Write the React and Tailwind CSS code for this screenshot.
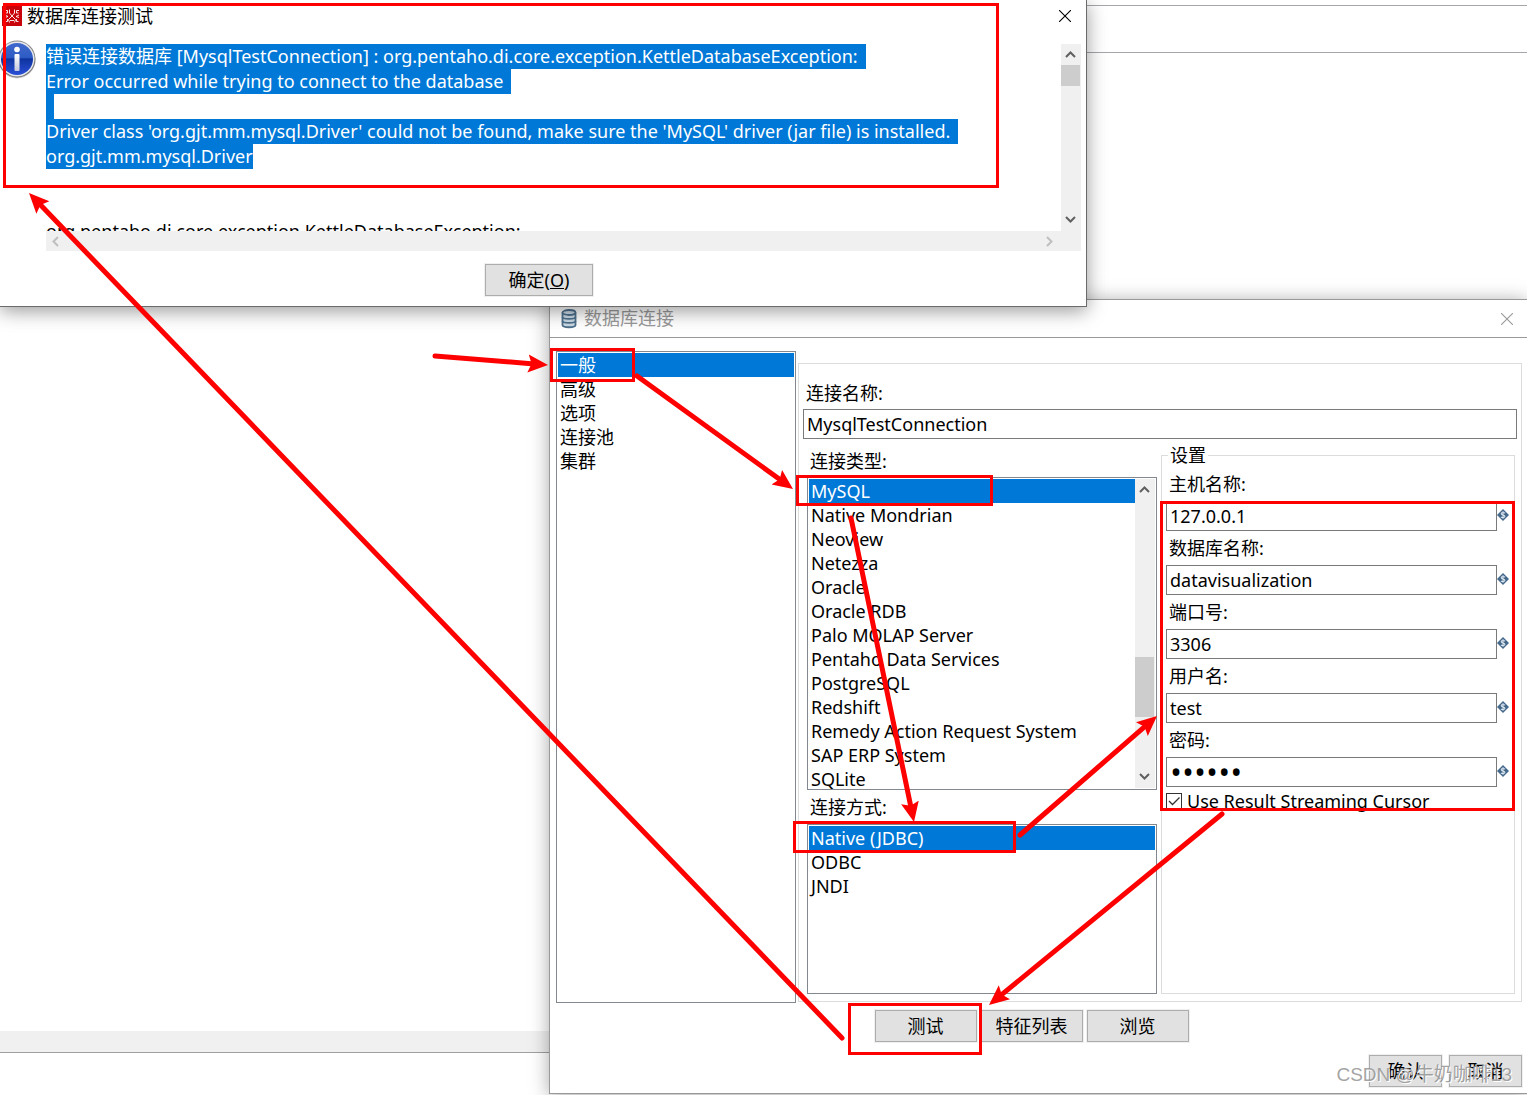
import { useState } from "react";

const SECTIONS = ["一般", "高级", "选项", "连接池", "集群"];

const CONNECTION_TYPES = [
  "MySQL",
  "Native Mondrian",
  "Neoview",
  "Netezza",
  "Oracle",
  "Oracle RDB",
  "Palo MOLAP Server",
  "Pentaho Data Services",
  "PostgreSQL",
  "Redshift",
  "Remedy Action Request System",
  "SAP ERP System",
  "SQLite",
];

const ACCESS_METHODS = ["Native (JDBC)", "ODBC", "JNDI"];

const SETTINGS = [
  { id: "host", label: "主机名称:", value: "127.0.0.1" },
  { id: "database", label: "数据库名称:", value: "datavisualization" },
  { id: "port", label: "端口号:", value: "3306" },
  { id: "user", label: "用户名:", value: "test" },
  { id: "password", label: "密码:", value: "secret", type: "password" },
];

const ERROR_LINES = [
  "错误连接数据库 [MysqlTestConnection] : org.pentaho.di.core.exception.KettleDatabaseException:",
  "Error occurred while trying to connect to the database",
  "",
  "Driver class 'org.gjt.mm.mysql.Driver' could not be found, make sure the 'MySQL' driver (jar file) is installed.",
  "org.gjt.mm.mysql.Driver",
];

const BOXES = [
  [3, 3, 996, 185],
  [550, 348, 85, 34],
  [796, 475, 197, 31],
  [793, 821, 223, 32],
  [1160, 501, 355, 310],
  [848, 1003, 134, 52],
];

const ARROWS = [
  [435, 356, 548, 365],
  [637, 376, 793, 489],
  [851, 518, 914, 822],
  [1020, 835, 1157, 716],
  [1222, 814, 989, 1005],
  [842, 1038, 29, 193],
];

function CloseIcon() {
  return (
    <svg width="12" height="12" viewBox="0 0 12 12" fill="none" stroke="currentColor" strokeWidth="1.1">
      <path d="M0 0L12 12M12 0L0 12" />
    </svg>
  );
}

function Chevron({ dir }) {
  const paths = {
    up: "M1 8L5.5 3.5L10 8",
    down: "M1 3L5.5 7.5L10 3",
    left: "M8 1L3.5 5.5L8 10",
    right: "M3 1L7.5 5.5L3 10",
  };
  return (
    <svg width="11" height="11" viewBox="0 0 11 11" fill="none" stroke="currentColor" strokeWidth="2">
      <path d={paths[dir]} />
    </svg>
  );
}

function KettleIcon() {
  return (
    <svg width="20" height="20" viewBox="0 0 20 20" fill="none">
      <rect width="20" height="20" fill="#c8040a" />
      <g stroke="#fff" strokeWidth="0.9">
        <path d="M3 4.500h2.500v2.500h-2M7.500 3.500v3.500l2.500 3" />
        <path d="M17 4.500h-2.500v2.500h2M12.500 3.500v3.500l-2.500 3" />
        <path d="M3.500 15.500h2v-2.500M7.500 16.500l-1-3l3.500-3.500" />
        <path d="M16.500 15.500h-2v-2.500M12.500 16.500l1-3l-3.500-3.500" />
        <path d="M3 9l3 1.500l-3 1M17 9l-3 1.500l3 1M8 14.500h4" />
      </g>
    </svg>
  );
}

function InfoIcon() {
  return (
    <svg width="37" height="40" viewBox="2 0 37 40">
      <defs>
        <linearGradient id="infoBlue" x1="0" y1="0" x2="0" y2="1">
          <stop offset="0" stopColor="#3f68cc" />
          <stop offset="0.45" stopColor="#2e5cc4" />
          <stop offset="0.5" stopColor="#0f34a0" />
          <stop offset="1" stopColor="#2a4fd6" />
        </linearGradient>
        <linearGradient id="infoRim" x1="0" y1="0" x2="0" y2="1">
          <stop offset="0" stopColor="#8d8d8d" />
          <stop offset="1" stopColor="#6b6b6b" />
        </linearGradient>
        <linearGradient id="infoStem" x1="0" y1="0" x2="0" y2="1">
          <stop offset="0" stopColor="#fff" />
          <stop offset="1" stopColor="#c4c8dc" />
        </linearGradient>
      </defs>
      <circle cx="19" cy="20" r="18.5" fill="#000" opacity="0.2" />
      <circle cx="19" cy="19" r="18.5" fill="url(#infoRim)" />
      <circle cx="19" cy="19" r="17.5" fill="#e6e8ec" />
      <circle cx="19" cy="19" r="16" fill="url(#infoBlue)" />
      <circle cx="19" cy="9.500" r="2.800" fill="#fff" />
      <rect x="16.500" y="14" width="5" height="17" rx="1" fill="url(#infoStem)" />
    </svg>
  );
}

function DatabaseIcon() {
  return (
    <svg width="16" height="20" viewBox="0 0 16 20" fill="#c9d8e4" stroke="#4d6f8b" strokeWidth="1.8">
      <path d="M1.500 3.500v12.500c0 3 13 3 13 0V3.500" />
      <ellipse cx="8" cy="3.500" rx="6.500" ry="2.500" />
      <path d="M1.500 8c0 2.500 13 2.500 13 0M1.500 12c0 2.500 13 2.500 13 0" fill="none" />
    </svg>
  );
}

function VariableIcon() {
  return (
    <svg className="shrink-0" width="12" height="14" viewBox="0 0 12 14" fill="none">
      <path d="M6 0L12 6L6 12L0 6Z" fill="#43688a" />
      <path d="M8 4.200C7 3.200 4.200 3.200 4.200 4.700C4.200 6.200 7.900 5.700 7.900 7.300C7.900 8.800 5 8.800 4 7.800M6 2.300V9.700" stroke="#dce6ee" strokeWidth="1.100" />
    </svg>
  );
}

function ScrollBar({ thumb }) {
  return (
    <div className="flex w-5 shrink-0 flex-col bg-[#f0f0f0] text-[#606060]">
      <button type="button" aria-label="Scroll up" className="flex h-[21px] w-[19px] shrink-0 items-center justify-center">
        <Chevron dir="up" />
      </button>
      <div className="flex-1">{thumb}</div>
      <button type="button" aria-label="Scroll down" className="flex h-[23px] w-[19px] shrink-0 items-center justify-center">
        <Chevron dir="down" />
      </button>
    </div>
  );
}

function ListBox({ label, items, className, children }) {
  const [selected, setSelected] = useState(items[0]);

  return (
    <div className={`flex overflow-hidden border border-[#828790] bg-white p-px ${className}`}>
      <ul role="listbox" aria-label={label} className="min-w-0 flex-1">
        {items.map((item) => (
          <li
            key={item}
            role="option"
            aria-selected={item === selected}
            onClick={() => setSelected(item)}
            className={`h-6 cursor-default truncate px-[2px] leading-6 ${item === selected ? "bg-[#0078d7] text-white" : ""}`}
          >
            {item}
          </li>
        ))}
      </ul>
      {children}
    </div>
  );
}

function PushButton({ className, children }) {
  return (
    <button type="button" className={`h-8 border border-[#adadad] bg-[#e1e1e1] outline outline-1 outline-[#f0f0f0] ${className}`}>
      {children}
    </button>
  );
}

function TestResultDialog() {
  return (
    <section
      aria-label="数据库连接测试"
      className="absolute left-0 top-0 z-20 w-[1087px] border-b border-r border-[#6b6b6b] bg-white shadow-[0_4px_18px_rgba(0,0,0,0.4)]"
    >
      <header className="flex h-8 items-center gap-[5px] pl-[2px] pr-[15px]">
        <KettleIcon />
        <h2 className="flex-1">数据库连接测试</h2>
        <button type="button" aria-label="Close">
          <CloseIcon />
        </button>
      </header>
      <div className="flex pr-[5px] pt-2">
        <div className="w-[46px] shrink-0">
          <InfoIcon />
        </div>
        <div className="min-w-0 flex-1 pt-1">
          <div className="flex h-[187px]">
            <div className="flex-1 overflow-hidden whitespace-pre leading-[25px]">
              {ERROR_LINES.map((line, i) => (
                <div key={i} className="h-[25px]">
                  <span className={`inline-block h-[25px] bg-[#0078d7] text-white ${i < 4 ? "pr-2" : ""}`}>{line}</span>
                </div>
              ))}
              <div className="h-[50px]" />
              <div className="h-[25px]">org.pentaho.di.core.exception.KettleDatabaseException:</div>
            </div>
            <ScrollBar thumb={<div className="h-[21px] w-[19px] bg-[#cdcdcd]" />} />
          </div>
          <div className="flex h-5 items-center justify-between bg-[#f0f0f0] pl-1 pr-[26px] text-[#bfbfbf]">
            <button type="button" aria-label="Scroll left">
              <Chevron dir="left" />
            </button>
            <button type="button" aria-label="Scroll right">
              <Chevron dir="right" />
            </button>
          </div>
        </div>
      </div>
      <div className="flex justify-center pb-[10px] pr-2 pt-[13px]">
        <PushButton className="w-[108px]">
          确定(<u>O</u>)
        </PushButton>
      </div>
    </section>
  );
}

function ConnectionDialog() {
  return (
    <section
      aria-label="数据库连接"
      className="absolute bottom-px left-[549px] right-0 top-[299px] z-10 flex flex-col border-b border-l border-t border-[#999] bg-white shadow-[0_2px_18px_rgba(0,0,0,0.35)]"
    >
      <header className="flex h-[38px] shrink-0 items-center gap-[7px] border-b border-[#999] pl-[11px] pr-[14px] text-[#999]">
        <DatabaseIcon />
        <h2 className="flex-1">数据库连接</h2>
        <button type="button" aria-label="Close">
          <CloseIcon />
        </button>
      </header>

      <div className="flex min-h-0 flex-1 gap-[2px] pl-[6px] pr-[5px] pt-[13px]">
        <ListBox label="分类" items={SECTIONS} className="w-60 shrink-0" />

        <div className="mb-px mt-3 flex min-w-0 flex-1 flex-col border border-[#dcdcdc] px-1 pb-[7px] pt-[13px]">
          <label htmlFor="connection-name" className="h-8 shrink-0 pl-[3px] leading-8">
            连接名称:
          </label>
          <input
            id="connection-name"
            defaultValue="MysqlTestConnection"
            className="h-[30px] w-full shrink-0 border border-[#7a7a7a] px-[3px] outline-none"
          />

          <div className="flex min-h-0 flex-1 gap-1 pl-1 pr-[2px]">
            <div className="flex min-w-0 flex-1 flex-col pt-[6px]">
              <div className="h-8 shrink-0 pl-[3px] leading-8">连接类型:</div>
              <ListBox label="连接类型" items={CONNECTION_TYPES} className="h-[313px] shrink-0">
                <ScrollBar thumb={<div className="mt-[157px] h-[60px] w-[19px] bg-[#cdcdcd]" />} />
              </ListBox>
              <div className="h-[34px] shrink-0 pl-[3px] leading-[34px]">连接方式:</div>
              <ListBox label="连接方式" items={ACCESS_METHODS} className="flex-1" />
            </div>

            <fieldset className="mt-[5px] w-[354px] min-w-0 shrink-0 border border-[#dcdcdc] pl-1 pr-[5px]">
              <legend className="ml-[2px] px-[2px] leading-[23px]">设置</legend>
              {SETTINGS.map(({ id, label, value, type }) => (
                <div key={id}>
                  <label htmlFor={id} className="block h-[34px] pl-[3px] leading-[34px]">
                    {label}
                  </label>
                  <div className="flex items-center">
                    <input
                      id={id}
                      type={type || "text"}
                      defaultValue={value}
                      className={`h-[30px] w-0 min-w-0 flex-1 border border-[#7a7a7a] px-[3px] outline-none ${
                        type === "password" ? "font-['Open_Sans',sans-serif] text-[32px]" : ""
                      }`}
                    />
                    <VariableIcon />
                  </div>
                </div>
              ))}
              <label className="flex h-7 items-center gap-[5px]">
                <span className="relative flex">
                  <input type="checkbox" defaultChecked className="peer h-4 w-4 appearance-none border border-[#333] bg-white" />
                  <svg className="pointer-events-none absolute inset-0 hidden peer-checked:block" width="16" height="16" viewBox="0 0 16 16" fill="none" stroke="#333" strokeWidth="1.3">
                    <path d="M3 8L6.500 11.500L13.500 4.500" />
                  </svg>
                </span>
                Use Result Streaming Cursor
              </label>
            </fieldset>
          </div>
        </div>
      </div>

      <div className="mt-[7px] flex shrink-0 justify-center gap-1 pl-[10px] pr-6">
        <PushButton className="w-[102px]">测试</PushButton>
        <PushButton className="w-[102px]">特征列表</PushButton>
        <PushButton className="w-[102px]">浏览</PushButton>
      </div>
      <footer className="mt-[13px] flex shrink-0 justify-end gap-[7px] pb-[6px] pr-[5px]">
        <PushButton className="w-[73px]">确认</PushButton>
        <PushButton className="w-[73px]">取消</PushButton>
      </footer>
    </section>
  );
}

// Red boxes and arrows that walk through the steps
function Annotations() {
  return (
    <svg className="pointer-events-none absolute left-0 top-0 z-30" width="1527" height="1095" fill="none" stroke="#f00">
      <defs>
        <marker id="head" markerUnits="userSpaceOnUse" markerWidth="24" markerHeight="20" refX="20" refY="9" orient="auto">
          <path d="M20 9L0 0L3.500 9L0 18Z" fill="#f00" stroke="none" />
        </marker>
      </defs>
      {BOXES.map(([x, y, w, h]) => (
        <rect key={`${x}-${y}`} x={x + 1.5} y={y + 1.5} width={w - 3} height={h - 3} strokeWidth="3" />
      ))}
      {ARROWS.map(([x1, y1, x2, y2]) => {
        const len = Math.hypot(x2 - x1, y2 - y1);
        const k = (len - 14) / len;
        return (
          <g key={`${x1}-${y1}`}>
            <path d={`M${x1} ${y1}L${x1 + (x2 - x1) * k} ${y1 + (y2 - y1) * k}`} strokeWidth="5" strokeLinecap="round" />
            <path d={`M${x1} ${y1}L${x2} ${y2}`} stroke="none" markerEnd="url(#head)" />
          </g>
        );
      })}
    </svg>
  );
}

export default function App() {
  return (
    <main className="relative flex h-screen flex-col overflow-hidden bg-white font-['Noto_Sans','Noto_Sans_CJK_SC',sans-serif] text-[18px] text-black">
      <div className="mt-[5px] h-12 shrink-0 border-y border-[#a5a5aa]" />
      <div className="flex-1" />
      <div className="h-[22px] shrink-0 border-b border-[#a0a0a0] bg-[#f0f0f0]" />
      <div className="h-[42px] shrink-0" />
      <TestResultDialog />
      <ConnectionDialog />
      <Annotations />
      <p className="pointer-events-none absolute bottom-1 right-[15px] z-40 font-['Liberation_Sans','Noto_Sans_CJK_SC',sans-serif] text-[19px] leading-8 text-[#8c8c8c]/80 [text-shadow:1px_1px_0_#fff]">
        CSDN @牛奶咖啡13
      </p>
    </main>
  );
}
